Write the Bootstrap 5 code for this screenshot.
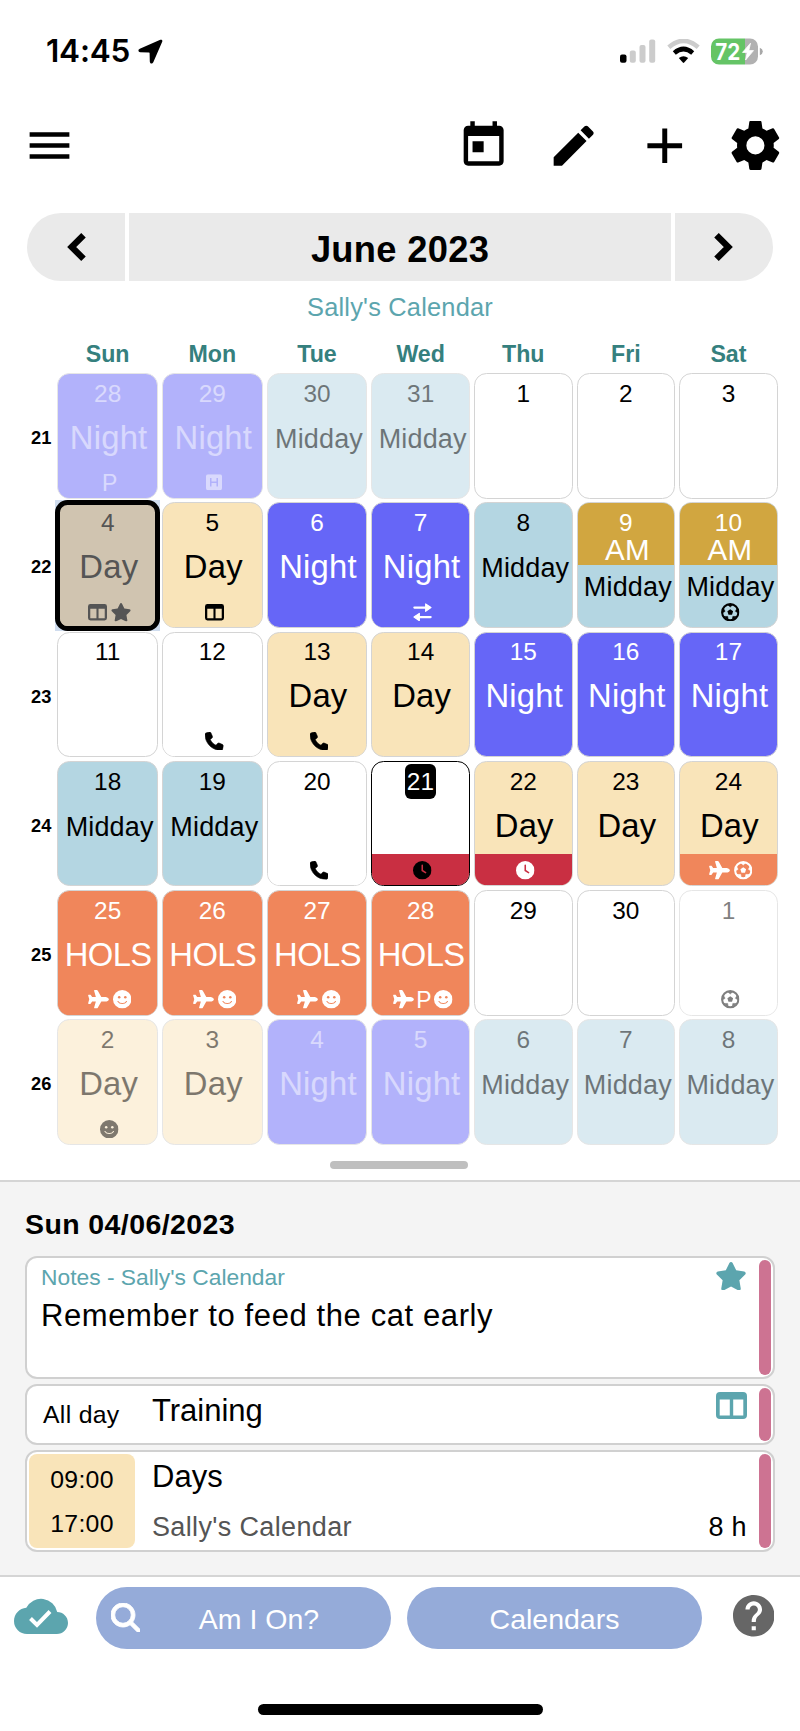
<!DOCTYPE html>
<html lang="en">
<head>
<meta charset="utf-8">
<meta name="viewport" content="width=device-width, initial-scale=1">
<title>Sally's Calendar</title>
<link rel="stylesheet" href="https://cdn.jsdelivr.net/npm/bootstrap@5.3.0/dist/css/bootstrap.min.css">
<style>
  body { font-family: "Liberation Sans", Arial, sans-serif; color: #000; background: #fff; width: 800px; line-height: 1; overflow: hidden; }
  svg { display: block; flex: none; fill: currentColor; }
  .teal { color: #5ca5ae; }

  /* status bar */
  .status { height: 102px; padding: 0 37px 0 46px; }
  .clock { font: 600 31.5px/1 Inter, sans-serif; letter-spacing: -.2px; }
  .wifi, .battery { margin-left: 11px; }

  /* toolbar */
  .tools { height: 87px; padding: 0 15.6px 0 23px; }
  .tool-edit { margin-left: 36.7px; }
  .tool-add { margin-left: 34.1px; }
  .tool-gear { margin-left: 31.4px; }

  /* month switcher */
  .month { margin: 24px 26.7px 0; height: 68px; gap: 4.3px; }
  .month > * { background: #eaeaea; }
  .month .step { width: 98.3px; }
  .month .prev { border-radius: 34px 0 0 34px; }
  .month .next { border-radius: 0 34px 34px 0; }
  .month h1 { font-size: 36.3px; font-weight: 700; letter-spacing: .3px; line-height: 74px; margin: 0; height: 68px; }
  .owner { font-size: 25.4px; letter-spacing: .2px; line-height: 30px; height: 55px; padding-top: 11px; }

  /* calendar grid */
  .month-grid { display: grid; grid-template-columns: 22.3px repeat(3, 100.7px) repeat(4, 98.6px); column-gap: 4px; margin-left: 31px; }
  .weekdays { height: 37px; font-weight: 700; font-size: 23.2px; line-height: 36px; color: #35807e; text-align: center; }
  .weeks { grid-auto-rows: 125.6px; row-gap: 3.7px; }
  .week { font-size: 18.3px; font-weight: 700; line-height: 130px; }
  .cell { --bg: #fff; background: var(--bg); border: 1px solid #d4d4d4; border-radius: 12.5px; overflow: hidden; display: flex; flex-direction: column; text-align: center; padding-top: 4.8px; min-width: 0; }
  .num { font-size: 24.4px; line-height: 30px; height: 30px; flex: none; }
  .shift { font-size: 32.8px; line-height: 58px; height: 56px; flex: none; letter-spacing: .2px; white-space: nowrap; padding-left: 2px; }
  .night { --bg: #6666f7; color: #fff; }
  .day { --bg: #f9e4b9; }
  .mid { --bg: #b4d6e2; }
  .hols { --bg: #f0865b; color: #fff; }
  .hols .shift { letter-spacing: -.6px; padding-left: 1px; }
  .mid .shift { font-size: 27px; line-height: 60.6px; letter-spacing: .15px; padding-left: 4px; }
  .faded { border-color: #e6e6e6; }
  .faded > * { opacity: .5; }
  .faded.night { --bg: #b2b2fb; }
  .faded.day { --bg: #fcf1dc; }
  .faded.mid { --bg: #daeaf1; }
  .marks { margin-top: auto; height: 31.2px; flex: none; display: flex; align-items: center; justify-content: center; gap: 4px; padding: 1px 0 0 4px; background: var(--bg); }
  .marks svg { height: 18.5px; }
  .marks b { font: 400 23px/24px "Liberation Sans", sans-serif; }
  .marks.tight { gap: 2.5px; }
  .red { --bg: #c92f42; }
  .orange { --bg: #f0865b; color: #fff; }
  .split { padding-top: 0; }
  .split .am { background: #d1a640; color: #fff; height: 62px; padding-top: 4.8px; flex: none; }
  .split .am .shift { font-size: 29.5px; line-height: 23px; height: 26px; letter-spacing: .3px; padding-left: 3px; }
  .split > .shift { height: 30px; line-height: 45px; }
  .split .marks { background: none; }
  .today { border-color: #000; }
  .today .num span { background: #000; color: #fff; border-radius: 6px; padding: 3px 2.5px 2px 2px; display: inline-block; height: 35px; line-height: 30px; margin-top: -3px; }
  .picked-wrap { background: #cfdcee; margin: -2px -2.3px -3px -2px; }
  .picked { --bg: #d0c4b0; border: 5px solid #000; height: 100%; padding-top: 2.8px; color: #555; }
  .picked .marks { height: 27px; padding-bottom: 1px; }

  /* day panel */
  .handle { width: 138px; height: 8.5px; border-radius: 5px; background: #bfbfbf; margin: 15.9px auto 0 330px; }
  .panel { margin-top: 10.5px; height: 397px; background: #f4f4f4; border-top: 2px solid #d5d5d5; border-bottom: 2px solid #d5d5d5; padding: 0 25px; }
  .panel h2 { font-size: 28.5px; font-weight: 700; letter-spacing: .4px; line-height: 30px; margin: 0; padding-top: 27px; height: 74px; }
  .entry { background: #fff; border: 2px solid #d0d0d0; border-radius: 12px; display: flex; padding: 2px; margin-bottom: 4.8px; }
  .stripe { width: 12px; border-radius: 6px; background: #cd7392; flex: none; }
  .big { font-size: 31px; line-height: 34px; }
  .note { height: 123.5px; }
  .note .body { padding-left: 12px; }
  .note .cap { font-size: 22.8px; line-height: 24px; padding-top: 4.8px; }
  .note .big { letter-spacing: .6px; margin-top: 10px; }
  .note > svg { margin: 2px 13px 0 0; }
  .when { width: 106px; font-size: 24.8px; text-align: center; flex: none; letter-spacing: .3px; }
  .allday { height: 61px; }
  .allday .when { line-height: 54px; padding: 0 1.500px 0 0; }
  .allday .big { padding: 5.5px 0 0 17px; }
  .allday > svg { margin: 4px 12px 0 0; }
  .timed { height: 102px; margin: 0; }
  .timed .when { background: #f9e4b9; border-radius: 8px; line-height: 43.4px; padding-top: 4.5px; }
  .timed .body { padding: 6px 12px 0 17px; }
  .foot { font-size: 27px; letter-spacing: .35px; line-height: 30px; margin-top: 18px; }
  .foot .src { color: #555; }

  /* bottom bar */
  .actions { height: 127px; padding: 10px 0 0 14px; }
  .cloud { margin-top: 11px; }
  .pill { width: 295px; height: 62px; border-radius: 31px; background: #95abd9; color: #fff; font-size: 28.5px; line-height: 64px; padding: 0; border: 0; text-align: center; display: flex; }
  .pill svg { margin: 16px 0 0 14.5px; }
  .pill .with-icon { padding-right: 13px; }
  .help { margin: 8.5px 0 0 30.5px; color: #666; }
  .home { width: 285px; height: 11px; border-radius: 6px; background: #000; margin-left: 258px; }
</style>
</head>
<body>

<svg width="0" height="0" class="position-absolute" aria-hidden="true">
  <symbol id="plane" viewBox="0 0 576 512"><path d="M482.3 192c34.2 0 93.7 29 93.7 64c0 36-59.5 64-93.7 64l-116.6 0L265.2 495.9c-5.7 10-16.3 16.1-27.8 16.1l-56.2 0c-10.6 0-18.3-10.2-15.4-20.4l49-171.6L112 320 68.8 377.6c-3 4-7.8 6.4-12.8 6.4l-42 0c-7.8 0-14-6.3-14-14c0-1.3 .2-2.6 .5-3.9L32 256 .5 145.9c-.4-1.3-.5-2.6-.5-3.9c0-7.8 6.3-14 14-14l42 0c5 0 9.8 2.4 12.8 6.4L112 192l102.9 0-49-171.6C162.9 10.2 170.6 0 181.2 0l56.2 0c11.5 0 22.1 6.2 27.8 16.1L365.7 192l116.6 0z"/></symbol>
  <symbol id="phone" viewBox="0 0 512 512"><path stroke="currentColor" stroke-width="16" d="M164.9 24.6c-7.7-18.6-28-28.5-47.4-23.2l-88 24C12.1 30.2 0 46 0 64C0 311.4 200.6 512 448 512c18 0 33.8-12.1 38.6-29.500l24-88c5.3-19.4-4.6-39.7-23.2-47.4l-96-40c-16.3-6.8-35.2-2.1-46.3 11.6L304.7 368C234.3 334.7 177.3 277.7 144 207.3L193.3 167c13.7-11.2 18.4-30 11.6-46.3l-40-96z"/></symbol>
  <symbol id="star" viewBox="20 0 536 512"><path d="M316.9 18C311.6 7 300.4 0 288.1 0s-23.4 7-28.8 18L195 150.3 51.4 171.5c-12 1.8-22 10.2-25.7 21.7s-.7 24.2 7.9 32.7L137.8 329 113.2 474.7c-2 12 3 24.2 12.9 31.3s23 8 33.8 2.3l128.3-68.5 128.3 68.5c10.8 5.7 23.9 4.9 33.8-2.3s14.9-19.3 12.9-31.3L438.5 329 542.7 225.9c8.6-8.5 11.7-21.2 7.9-32.7s-13.7-19.9-25.7-21.7L381.2 150.3 316.9 18z"/></symbol>
  <symbol id="smile" viewBox="0 0 20 20"><circle cx="10" cy="10" r="10"/><g fill="var(--bg)"><circle cx="6.7" cy="7.9" r="1.35"/><circle cx="13.3" cy="7.9" r="1.35"/></g><path d="M5.4 12.4C7.4 15.4 12.6 15.4 14.6 12.4" fill="none" stroke="var(--bg)" stroke-width="1.2" stroke-linecap="round"/></symbol>
  <symbol id="clock" viewBox="0 0 20 20"><circle cx="10" cy="10" r="10"/><path d="M10 4.5V10.3L13.6 12.6" fill="none" stroke="var(--bg)" stroke-width="1.7" stroke-linecap="round"/></symbol>
  <symbol id="ball" viewBox="0 0 20 20"><circle cx="10" cy="10" r="8.8" fill="none" stroke="currentColor" stroke-width="2.2"/><path d="M10 6.8l3.1 2.2-1.2 3.7H8.1L6.9 9z"/><path d="M7 1.600h6L10 4.300zM17.600 5.300l1.400 5.800-3.400-2.100zM2.400 5.300L1 11.100 4.400 9zM16.700 14.600l-4.500 3.400.6-3.500zM3.300 14.600l4.500 3.400-.6-3.500z" stroke="currentColor" stroke-width=".6" stroke-linejoin="round"/></symbol>
  <symbol id="cols" viewBox="0 0 31 27"><path fill-rule="evenodd" d="M4 0H27a4 4 0 0 1 4 4V23a4 4 0 0 1-4 4H4a4 4 0 0 1-4-4V4a4 4 0 0 1 4-4zM3.7 7.6V23.4H13.8V7.6zM17.2 7.6V23.4H27.3V7.6z"/></symbol>
  <symbol id="swap" viewBox="0 0 20 20"><path d="M1.200 4.900H14M18.800 15.200H6" stroke="currentColor" stroke-width="2.400" stroke-linecap="round"/><path d="M13.400 1L19.200 4.900 13.400 9zM6.600 11.200L.8 15.200 6.600 19.200z" stroke="currentColor" stroke-width="1.200" stroke-linejoin="round"/></symbol>
  <symbol id="hosp" viewBox="0 0 20 20"><path fill-rule="evenodd" d="M2.5 0H17.5A2.5 2.5 0 0 1 20 2.5V17.5A2.5 2.5 0 0 1 17.5 20H2.5A2.5 2.5 0 0 1 0 17.5V2.5A2.5 2.5 0 0 1 2.5 0zM5 4.8V15.2H6.9V10.9H13.1V15.2H15V4.8H13.1V9.2H6.9V4.8z"/></symbol>
</svg>

<header class="status d-flex align-items-center">
  <span class="clock">14:45</span>
  <svg class="ms-2" width="25" height="25" viewBox="0 0 25 25"><path d="M22.3.8L1.8 9.7C-.3 10.7.2 13.2 2.2 13.2L11 13.4Q11.600 13.400 11.600 14L11.800 22.600C11.900 25 14.300 25.300 15.300 23.200L24.200 2.700C24.800 1.300 23.700.2 22.300.8z"/></svg>
  <div class="d-flex align-items-center ms-auto">
    <svg width="36" height="24" viewBox="0 0 36 24"><rect x="0" y="15.500" width="6.500" height="8.200" rx="2"/><g fill="#ccc"><rect x="9.800" y="11.600" width="6" height="12.100" rx="2"/><rect x="19.500" y="6" width="6" height="17.700" rx="2"/><rect x="29.200" y=".5" width="6" height="23.200" rx="2"/></g></svg>
    <svg class="wifi" width="33" height="25" viewBox="0 0 33 25"><g fill="none"><path d="M1.800 8.200Q16.500-4.400 31.200 8.200" stroke="#ccc" stroke-width="4.600"/><path d="M7.300 14Q16.500 6 25.700 14" stroke="#000" stroke-width="4.600"/></g><path d="M11.800 19.100Q16.500 15.600 21.200 19.100L17.200 23.600Q16.500 24.300 15.800 23.600z"/></svg>
    <svg class="battery" width="52" height="27" viewBox="0 0 52 27"><path d="M8 .5H39A8 8 0 0 1 47 8.500V18.500A8 8 0 0 1 39 26.500H34V.5z" fill="#b1b1b1"/><path d="M8 .5H34V26.500H8A8 8 0 0 1 0 18.500V8.500A8 8 0 0 1 8 .5z" fill="#65c466"/><path d="M48.800 9.700Q51.800 11 51.800 13.500T48.800 17.300z" fill="#a8a8a8"/><text x="4.300" y="21.600" font-family="Inter, sans-serif" font-weight="700" font-size="22.500" textLength="25" lengthAdjust="spacingAndGlyphs" fill="#fff">72</text><path d="M39.500 5.200L31.500 14.400H36.200L34.600 22 42.500 12.600H37.800z" fill="#fff" stroke="#fff" stroke-width=".8" stroke-linejoin="round"/></svg>
  </div>
</header>

<nav class="tools d-flex align-items-center">
  <svg width="53" height="53" viewBox="0 0 24 24"><path d="M3 18h18v-2H3v2zm0-5h18v-2H3v2zm0-7v2h18V6H3z"/></svg>
  <svg class="ms-auto" width="53.300" height="53.300" viewBox="0 0 24 24"><path d="M19 3h-1V1h-2v2H8V1H6v2H5c-1.110 0-1.990.9-1.990 2L3 19c0 1.100.89 2 2 2h14c1.100 0 2-.9 2-2V5c0-1.100-.9-2-2-2zm0 16H5V7.600h14V19zM7 10h5v5H7z"/></svg>
  <svg class="tool-edit" width="53.300" height="53.300" viewBox="0 0 24 24"><path d="M3 17.250V21h3.750L17.810 9.940l-3.750-3.750L3 17.250zM20.710 7.040c.39-.39.39-1.020 0-1.410l-2.340-2.340c-.39-.39-1.020-.39-1.410 0l-1.830 1.830 3.750 3.750 1.830-1.830z"/></svg>
  <svg class="tool-add" width="59.500" height="59.500" viewBox="0 0 24 24"><path d="M19 13h-6v6h-2v-6H5v-2h6V5h2v6h6v2z"/></svg>
  <svg class="tool-gear" width="58.800" height="58.800" viewBox="0 0 24 24"><path d="M19.430 12.980c.04-.32.07-.64.07-.98s-.03-.66-.07-.98l2.110-1.650c.19-.15.24-.42.12-.64l-2-3.460c-.12-.22-.39-.3-.61-.22l-2.490 1c-.52-.4-1.080-.73-1.690-.98l-.38-2.650C14.460 2.180 14.250 2 14 2h-4c-.25 0-.46.18-.49.42l-.38 2.650c-.61.25-1.170.59-1.690.98l-2.490-1c-.23-.09-.49 0-.61.220l-2 3.460c-.13.220-.07.490.120.640l2.110 1.650c-.04.320-.07.650-.07.980s.03.660.07.980l-2.110 1.650c-.19.150-.24.420-.12.640l2 3.460c.120.220.390.300.610.220l2.490-1c.520.400 1.080.730 1.690.980l.380 2.650c.030.240.240.420.490.420h4c.250 0 .460-.180.490-.420l.380-2.650c.610-.250 1.170-.590 1.690-.980l2.490 1c.230.090.490 0 .610-.220l2-3.460c.120-.220.070-.490-.120-.640l-2.110-1.650zM12 15.700a3.700 3.700 0 1 1 0-7.400 3.700 3.700 0 0 1 0 7.400z"/></svg>
</nav>

<div class="month d-flex">
  <div class="step prev d-flex align-items-center justify-content-center"><svg width="20" height="30" viewBox="0 0 20 30"><path d="M17.500 3.200L5.700 15 17.500 26.800" fill="none" stroke="#000" stroke-width="6.400"/></svg></div>
  <h1 class="flex-grow-1 text-center">June 2023</h1>
  <div class="step next d-flex align-items-center justify-content-center"><svg width="20" height="30" viewBox="0 0 20 30"><path d="M2.500 3.200L14.300 15 2.500 26.800" fill="none" stroke="#000" stroke-width="6.400"/></svg></div>
</div>
<div class="owner teal text-center">Sally's Calendar</div>

<div class="month-grid weekdays"><span></span><span>Sun</span><span>Mon</span><span>Tue</span><span>Wed</span><span>Thu</span><span>Fri</span><span>Sat</span></div>

<main class="month-grid weeks">
  <div class="week">21</div>
  <div class="cell night faded"><div class="num">28</div><div class="shift">Night</div><div class="marks"><b>P</b></div></div>
  <div class="cell night faded"><div class="num">29</div><div class="shift">Night</div><div class="marks"><svg width="16" viewBox="0 0 20 20"><use href="#hosp"/></svg></div></div>
  <div class="cell mid faded"><div class="num">30</div><div class="shift">Midday</div></div>
  <div class="cell mid faded"><div class="num">31</div><div class="shift">Midday</div></div>
  <div class="cell"><div class="num">1</div></div>
  <div class="cell"><div class="num">2</div></div>
  <div class="cell"><div class="num">3</div></div>

  <div class="week">22</div>
  <div class="picked-wrap"><div class="cell picked"><div class="num">4</div><div class="shift">Day</div><div class="marks"><svg width="19"><use href="#cols"/></svg><svg width="20"><use href="#star"/></svg></div></div></div>
  <div class="cell day"><div class="num">5</div><div class="shift">Day</div><div class="marks"><svg width="19"><use href="#cols"/></svg></div></div>
  <div class="cell night"><div class="num">6</div><div class="shift">Night</div></div>
  <div class="cell night"><div class="num">7</div><div class="shift">Night</div><div class="marks"><svg width="19"><use href="#swap"/></svg></div></div>
  <div class="cell mid"><div class="num">8</div><div class="shift">Midday</div></div>
  <div class="cell mid split"><div class="am"><div class="num">9</div><div class="shift">AM</div></div><div class="shift">Midday</div></div>
  <div class="cell mid split"><div class="am"><div class="num">10</div><div class="shift">AM</div></div><div class="shift">Midday</div><div class="marks"><svg width="18.500"><use href="#ball"/></svg></div></div>

  <div class="week">23</div>
  <div class="cell"><div class="num">11</div></div>
  <div class="cell"><div class="num">12</div><div class="marks"><svg width="18.500"><use href="#phone"/></svg></div></div>
  <div class="cell day"><div class="num">13</div><div class="shift">Day</div><div class="marks"><svg width="18.500"><use href="#phone"/></svg></div></div>
  <div class="cell day"><div class="num">14</div><div class="shift">Day</div></div>
  <div class="cell night"><div class="num">15</div><div class="shift">Night</div></div>
  <div class="cell night"><div class="num">16</div><div class="shift">Night</div></div>
  <div class="cell night"><div class="num">17</div><div class="shift">Night</div></div>

  <div class="week">24</div>
  <div class="cell mid"><div class="num">18</div><div class="shift">Midday</div></div>
  <div class="cell mid"><div class="num">19</div><div class="shift">Midday</div></div>
  <div class="cell"><div class="num">20</div><div class="marks"><svg width="18.500"><use href="#phone"/></svg></div></div>
  <div class="cell today"><div class="num"><span>21</span></div><div class="marks red"><svg width="18.500"><use href="#clock"/></svg></div></div>
  <div class="cell day"><div class="num">22</div><div class="shift">Day</div><div class="marks red text-white"><svg width="18.500"><use href="#clock"/></svg></div></div>
  <div class="cell day"><div class="num">23</div><div class="shift">Day</div></div>
  <div class="cell day"><div class="num">24</div><div class="shift">Day</div><div class="marks orange"><svg width="21"><use href="#plane"/></svg><svg width="18.500"><use href="#ball"/></svg></div></div>

  <div class="week">25</div>
  <div class="cell hols"><div class="num">25</div><div class="shift">HOLS</div><div class="marks"><svg width="21"><use href="#plane"/></svg><svg width="18.500"><use href="#smile"/></svg></div></div>
  <div class="cell hols"><div class="num">26</div><div class="shift">HOLS</div><div class="marks"><svg width="21"><use href="#plane"/></svg><svg width="18.500"><use href="#smile"/></svg></div></div>
  <div class="cell hols"><div class="num">27</div><div class="shift">HOLS</div><div class="marks"><svg width="21"><use href="#plane"/></svg><svg width="18.500"><use href="#smile"/></svg></div></div>
  <div class="cell hols"><div class="num">28</div><div class="shift">HOLS</div><div class="marks tight"><svg width="21"><use href="#plane"/></svg><b>P</b><svg width="18.500"><use href="#smile"/></svg></div></div>
  <div class="cell"><div class="num">29</div></div>
  <div class="cell"><div class="num">30</div></div>
  <div class="cell faded"><div class="num">1</div><div class="marks"><svg width="18.500"><use href="#ball"/></svg></div></div>

  <div class="week">26</div>
  <div class="cell day faded"><div class="num">2</div><div class="shift">Day</div><div class="marks"><svg width="18.500"><use href="#smile"/></svg></div></div>
  <div class="cell day faded"><div class="num">3</div><div class="shift">Day</div></div>
  <div class="cell night faded"><div class="num">4</div><div class="shift">Night</div></div>
  <div class="cell night faded"><div class="num">5</div><div class="shift">Night</div></div>
  <div class="cell mid faded"><div class="num">6</div><div class="shift">Midday</div></div>
  <div class="cell mid faded"><div class="num">7</div><div class="shift">Midday</div></div>
  <div class="cell mid faded"><div class="num">8</div><div class="shift">Midday</div></div>
</main>

<div class="handle"></div>

<section class="panel">
  <h2>Sun 04/06/2023</h2>
  <div class="entry note">
    <div class="body flex-grow-1"><div class="cap teal">Notes - Sally's Calendar</div><div class="big">Remember to feed the cat early</div></div>
    <svg class="teal" width="30" height="28.500"><use href="#star"/></svg>
    <div class="stripe"></div>
  </div>
  <div class="entry allday">
    <div class="when">All day</div>
    <div class="big flex-grow-1">Training</div>
    <svg class="teal" width="31" height="27"><use href="#cols"/></svg>
    <div class="stripe"></div>
  </div>
  <div class="entry timed">
    <div class="when"><div>09:00</div><div>17:00</div></div>
    <div class="body flex-grow-1 d-flex flex-column">
      <div class="big">Days</div>
      <div class="foot d-flex justify-content-between"><span class="src">Sally's Calendar</span><span>8 h</span></div>
    </div>
    <div class="stripe"></div>
  </div>
</section>

<footer class="actions d-flex align-items-start">
  <svg class="teal cloud" width="54" height="36" viewBox="0 0 54 36"><path d="M13 36A13 13 0 0 1 0 23C0 16 5.500 10.300 12.300 9.800A16.500 16.500 0 0 1 43.200 14C49 14 54 18.700 54 25A11.200 11.200 0 0 1 42.800 36z"/><path d="M16.500 20.500L23 27 36 13.500" fill="none" stroke="#fff" stroke-width="4"/></svg>
  <button class="pill" style="margin-left:28px"><svg width="29.500" height="29.500" viewBox="0 0 512 512"><path stroke="#fff" stroke-width="16" d="M416 208c0 45.900-14.900 88.300-40 122.700L502.600 457.400c12.500 12.500 12.500 32.800 0 45.300s-32.800 12.500-45.300 0L330.700 376c-34.400 25.200-76.800 40-122.700 40C93.100 416 0 322.900 0 208S93.100 0 208 0S416 93.100 416 208zM208 352a144 144 0 1 0 0-288 144 144 0 1 0 0 288z"/></svg><span class="with-icon flex-grow-1">Am I On?</span></button>
  <button class="pill ms-3"><span class="flex-grow-1">Calendars</span></button>
  <svg class="help" width="41.500" height="41.500" viewBox="2 2 20 20"><path d="M12 2C6.480 2 2 6.480 2 12s4.480 10 10 10 10-4.480 10-10S17.520 2 12 2zm1 17h-2v-2h2v2zm2.070-7.750l-.9.920C13.450 12.900 13 13.500 13 15h-2v-.5c0-1.100.450-2.100 1.170-2.830l1.240-1.260c.370-.360.590-.860.590-1.410 0-1.100-.9-2-2-2s-2 .9-2 2H8c0-2.210 1.790-4 4-4s4 1.790 4 4c0 .880-.360 1.680-.930 2.250z"/></svg>
</footer>
<div class="home"></div>

<script src="https://cdn.jsdelivr.net/npm/bootstrap@5.3.0/dist/js/bootstrap.bundle.min.js"></script>
</body>
</html>
